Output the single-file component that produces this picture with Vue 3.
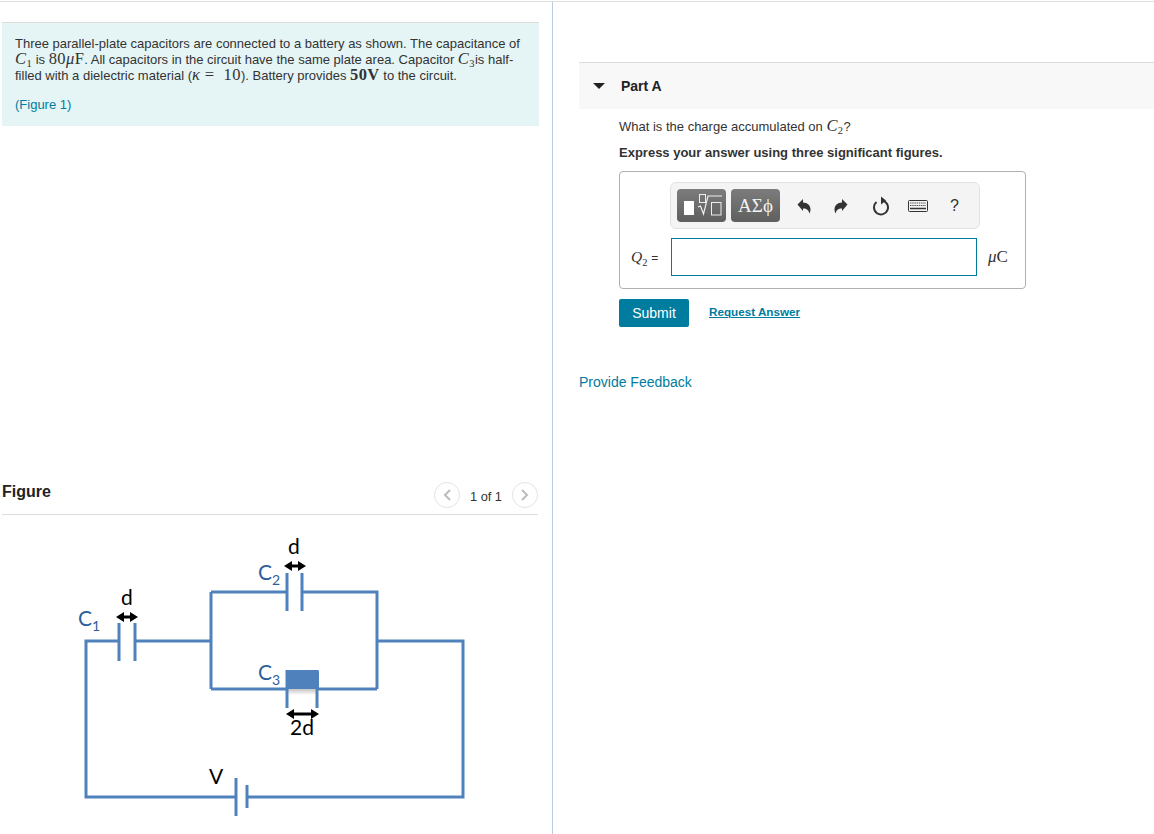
<script setup>
const wires = [
  'M119 641H86V797H236', 'M136 641H211', 'M211 592V689', 'M211 592H287', 'M302 592H377V689',
  'M377 641H463V797H247', 'M211 689H287', 'M317 689H377'
]
const plates = [
  [119, 623, 661], [135, 623, 661], [287, 573, 611], [302, 573, 611],
  [287, 670, 708], [317, 670, 708], [236, 778, 816], [247, 785, 808]
]
const arrows = [
  [116, 138, 617], [284, 306, 566], [286, 319, 714]
]
const labels = [
  { t: 'C', s: '1', x: 78, y: 626 },
  { t: 'C', s: '2', x: 258, y: 580 },
  { t: 'C', s: '3', x: 258, y: 680 }
]
const marks = [
  { t: 'd', x: 127, y: 605 },
  { t: 'd', x: 294, y: 554 },
  { t: '2d', x: 302, y: 735 },
  { t: 'V', x: 216, y: 784 }
]
</script>

<template>
  <div class="page">
    <section class="left">
      <div class="intro">
        <p class="statement">
          Three parallel-plate capacitors are connected to a battery as shown. The capacitance of<br>
          <span class="m"><i>C</i><sub>1</sub></span> is <span class="m">80<i>μ</i>F</span>. All capacitors in the circuit have the same plate area. Capacitor <span class="m"><i>C</i><sub>3</sub></span>is half-<br>
          filled with a dielectric material (<span class="m"><i>κ</i> = &nbsp;10</span>). Battery provides <span class="m"><b>50V</b></span> to the circuit.
        </p>
        <a class="fig-link">(Figure 1)</a>
      </div>
      <div class="figure-head">
        <h2>Figure</h2>
        <div class="pager">
          <span class="round"><svg width="10" height="14" viewBox="0 0 10 14"><path d="M8 2 3 7l5 5" fill="none" stroke="#bcbcbc" stroke-width="2"/></svg></span>
          <span class="count">1 of 1</span>
          <span class="round"><svg width="10" height="14" viewBox="0 0 10 14"><path d="m2 2 5 5-5 5" fill="none" stroke="#bcbcbc" stroke-width="2"/></svg></span>
        </div>
      </div>
      <svg class="circuit" width="552" height="319" viewBox="0 515 552 319">
        <defs>
          <linearGradient id="shade" x1="0" y1="0" x2="0" y2="1">
            <stop offset="0" stop-color="#c4c4c4"/>
            <stop offset="1" stop-color="#ffffff"/>
          </linearGradient>
        </defs>
        <rect x="288" y="689" width="29" height="6" fill="url(#shade)"/>
        <rect x="286" y="670" width="33" height="19" rx="2" fill="#4f81bd"/>
        <path v-for="w in wires" :key="w" :d="w" fill="none" stroke="#4f81bd" stroke-width="3"/>
        <line v-for="p in plates" :key="p.join()" :x1="p[0]" :x2="p[0]" :y1="p[1]" :y2="p[2]" stroke="#4f81bd" stroke-width="3"/>
        <g v-for="a in arrows" :key="a[2]">
          <line :x1="a[0] + 4" :x2="a[1] - 4" :y1="a[2]" :y2="a[2]" stroke="#000" stroke-width="3"/>
          <path :d="`M${a[0]} ${a[2]}l8-5v10zM${a[1]} ${a[2]}l-8-5v10z`" fill="#000"/>
        </g>
        <text v-for="l in labels" :key="l.s" class="clabel" :x="l.x" :y="l.y">{{ l.t }}<tspan class="csub" dy="5">{{ l.s }}</tspan></text>
        <text v-for="m in marks" :key="m.t + m.x" class="mark" :x="m.x" :y="m.y" text-anchor="middle">{{ m.t }}</text>
      </svg>
    </section>

    <section class="right">
      <header class="part-head">
        <svg class="caret" width="12" height="6" viewBox="0 0 12 6"><path d="M0 0h12L6 6z" fill="#222"/></svg>
        <h3>Part A</h3>
      </header>
      <div class="part-body">
        <p class="question">What is the charge accumulated on <span class="m"><i>C</i><sub>2</sub></span>?</p>
        <p class="instruction">Express your answer using three significant figures.</p>
        <div class="answer">
          <div class="toolbar">
            <button class="tool" aria-label="Templates">
              <svg width="49" height="33" viewBox="0 0 49 33">
                <rect x="7" y="12" width="10" height="14" fill="#fff"/>
                <rect x="22.500" y="5.500" width="6" height="8" fill="none" stroke="#eee"/>
                <path d="M21 18l2.500-1 3 8 4.500-18h14" fill="none" stroke="#eee" stroke-width="1.200"/>
                <rect x="34.500" y="13.500" width="9.500" height="12.500" fill="none" stroke="#eee"/>
              </svg>
            </button>
            <button class="tool">ΑΣϕ</button>
            <div class="actions">
              <svg width="14" height="16" viewBox="0 0 14 16"><path d="M.5 6.500 6 1v3.500c4.500 0 7.500 3 7.500 7 0 1.500-.5 3-1.200 4-.3-3-2.300-5-6.300-5V13z" fill="#333"/></svg>
              <svg width="14" height="16" viewBox="0 0 14 16"><path d="M13.500 6.500 8 1v3.500c-4.500 0-7.500 3-7.500 7 0 1.500.5 3 1.200 4 .3-3 2.300-5 6.300-5V13z" fill="#333"/></svg>
              <svg class="reload" width="18" height="20" viewBox="0 0 18 20"><path d="M4.500 6.100a7 7 0 1 0 5-1.600" fill="none" stroke="#333" stroke-width="2"/><path d="M9 .5v8l5-4z" fill="#333"/></svg>
              <svg class="keyboard" width="20" height="12" viewBox="0 0 20 12">
                <rect x=".5" y=".5" width="19" height="11" rx="1" fill="#f4f4f4" stroke="#333"/>
                <path d="M2 3h16M2 5.500h16" stroke="#555" stroke-width="1.200" stroke-dasharray="1.500 .7"/>
                <path d="M2 8.500h16" stroke="#333" stroke-width="1.500"/>
              </svg>
              <span class="help">?</span>
            </div>
          </div>
          <div class="entry">
            <span class="symbol"><i>Q</i><sub>2</sub> <b>=</b></span>
            <div class="field"></div>
            <span class="unit"><i>μ</i>C</span>
          </div>
        </div>
        <div class="submit-row">
          <button class="submit">Submit</button>
          <a class="request">Request Answer</a>
        </div>
      </div>
      <a class="feedback">Provide Feedback</a>
    </section>
  </div>
</template>

<style>
body { margin: 0; background: #fff; }
</style>

<style scoped>
.page {
  display: flex;
  width: 1154px;
  height: 833px;
  box-sizing: border-box;
  margin-top: 1px;
  border-top: 1px solid #dfdfdf;
  font-family: "Liberation Sans", Arial, sans-serif;
  color: #333;
  overflow: hidden;
}
.left {
  width: 552px;
  flex: none;
  border-right: 1px solid #b9cde0;
  padding-top: 20px;
}
.intro {
  margin-left: 2px;
  width: 537px;
  height: 104px;
  box-sizing: border-box;
  background: #e5f5f6;
  border-top: 1px solid #dcdcdc;
  padding: 13px 13px 0;
  font-size: 13px;
  line-height: 16px;
}
.statement { margin: 0 0 13px; color: #333; white-space: nowrap; }
.m { font-family: "Liberation Serif", "DejaVu Serif", serif; font-size: 16.500px; line-height: 0; letter-spacing: .4px; }
.m sub { font-size: 10.500px; line-height: 0; vertical-align: -3px; }
.fig-link { color: #007c9e; font-size: 13px; }
.figure-head {
  margin-top: 352px;
  margin-left: 2px;
  width: 536px;
  height: 37px;
  box-sizing: border-box;
  border-bottom: 1px solid #dcdcdc;
  display: flex;
  justify-content: space-between;
  align-items: flex-start;
}
.figure-head h2 {
  margin: 4px 0 0;
  font-size: 16px;
  line-height: 20px;
  font-weight: 700;
  color: #222;
}
.pager { display: flex; align-items: center; gap: 10px; margin-top: 4px; }
.count { font-size: 12.800px; color: #333; padding-top: 2px; }
.round {
  width: 26px;
  height: 26px;
  box-sizing: border-box;
  border: 1px solid #e4e4e4;
  border-radius: 50%;
  display: flex;
  align-items: center;
  justify-content: center;
}
.circuit { display: block; }
.clabel { font-family: Lato, sans-serif; font-size: 21px; fill: #2f5f9b; }
.csub { font-size: 14px; }
.mark { font-family: Lato, sans-serif; font-size: 21px; fill: #000; }

.right { flex: 1; padding: 60px 0 0 26px; min-width: 0; }
.part-head {
  height: 47px;
  box-sizing: border-box;
  border-top: 1px solid #dcdcdc;
  background: #f8f8f8;
  display: flex;
  align-items: center;
  padding-left: 14px;
}
.caret { flex: none; }
.part-head h3 { margin: 0 0 0 16px; font-size: 14px; font-weight: 700; color: #222; }
.part-body { padding-left: 40px; width: 407px; }
.question { margin: 9px 0 0; font-size: 13px; line-height: 18px; color: #333; white-space: nowrap; }
.instruction { margin: 8px 0 0; font-size: 13px; line-height: 18px; font-weight: 700; color: #333; }
.answer {
  margin-top: 9px;
  width: 407px;
  height: 118px;
  box-sizing: border-box;
  border: 1px solid #b0b0b0;
  border-radius: 4px;
  padding: 10px 0 0 50px;
}
.toolbar {
  width: 310px;
  height: 47px;
  box-sizing: border-box;
  background: #f4f4f4;
  border: 1px solid #e2e2e2;
  border-radius: 6px;
  padding: 6px;
  display: flex;
  gap: 5px;
}
.tool {
  width: 49px;
  height: 33px;
  padding: 0;
  border: 0;
  border-radius: 4px;
  background: linear-gradient(#7c7c7c, #5f5f5f);
  color: #f2f2f2;
  display: flex;
  align-items: center;
  justify-content: center;
  font-family: "Liberation Serif", serif;
  font-size: 19px;
}
.actions {
  flex: 1;
  display: flex;
  align-items: center;
  gap: 23px;
  padding-left: 12px;
}
.reload { margin-left: 1px; }
.keyboard { margin-left: -5px; }
.help { font-size: 16px; color: #333; margin-left: -1px; }
.entry { display: flex; align-items: center; margin: 9px 0 0 -39px; }
.symbol {
  width: 40px;
  font-family: "Liberation Serif", serif;
  font-size: 15.500px;
  color: #333;
}
.symbol sub { font-size: 10.500px; line-height: 0; }
.symbol b { font-family: "Liberation Sans", sans-serif; font-weight: 400; font-size: 12px; }
.field {
  width: 306px;
  height: 38px;
  box-sizing: border-box;
  border: 1px solid #007c9e;
  background: #fff;
}
.unit {
  margin-left: 11px;
  font-family: "Liberation Serif", serif;
  font-size: 17px;
  color: #333;
}
.submit-row { display: flex; align-items: center; margin-top: 10px; gap: 20px; }
.submit {
  width: 70px;
  height: 28px;
  border: 0;
  border-radius: 2px;
  background: #007c9e;
  color: #fff;
  font-family: "Liberation Sans", sans-serif;
  font-size: 14px;
  padding: 0;
}
.request {
  color: #007c9e;
  font-size: 11.700px;
  font-weight: 700;
  text-decoration: underline;
  margin-top: -4px;
}
.feedback {
  display: block;
  margin-top: 47px;
  color: #007c9e;
  font-size: 14px;
  line-height: 16px;
}
</style>
